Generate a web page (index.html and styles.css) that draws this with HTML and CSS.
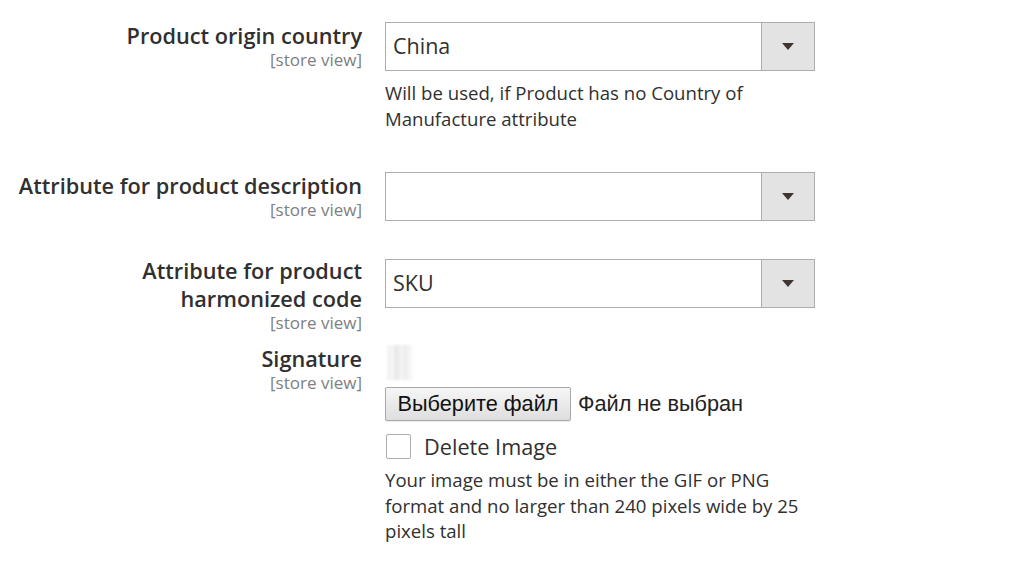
FILE: index.html
```html
<!DOCTYPE html>
<html lang="en">
<head>
<meta charset="utf-8">
<title>Config</title>
<link rel="stylesheet" href="styles.css">
</head>
<body>
<div class="form">
  <div class="field f1">
    <div class="label"><span class="title">Product origin country</span><span class="scope">[store view]</span></div>
    <div class="control">
      <div class="select"><span class="value">China</span><span class="arrow"><span class="tri"></span></span></div>
      <div class="note">Will be used, if Product has no Country of Manufacture attribute</div>
    </div>
  </div>
  <div class="field f2">
    <div class="label"><span class="title">Attribute for product description</span><span class="scope">[store view]</span></div>
    <div class="control">
      <div class="select"><span class="value"></span><span class="arrow"><span class="tri"></span></span></div>
    </div>
  </div>
  <div class="field f3">
    <div class="label"><span class="title narrow">Attribute for product harmonized code</span><span class="scope">[store view]</span></div>
    <div class="control">
      <div class="select"><span class="value">SKU</span><span class="arrow"><span class="tri"></span></span></div>
    </div>
  </div>
  <div class="field f4">
    <div class="label"><span class="title">Signature</span><span class="scope">[store view]</span></div>
    <div class="control">
      <div class="preview"></div>
      <div class="file"><span class="file-btn">Выберите файл</span><span class="file-name">Файл не выбран</span></div>
      <label class="check"><span class="box"></span><span class="check-text">Delete Image</span></label>
      <div class="note">Your image must be in either the GIF or PNG format and no larger than 240 pixels wide by 25 pixels tall</div>
    </div>
  </div>
</div>
</body>
</html>
```
FILE: styles.css
```css
html, body {
  margin: 0;
  padding: 0;
  background: #ffffff;
}
body {
  font-family: "Open Sans", "DejaVu Sans", sans-serif;
  color: #303030;
  width: 1024px;
  height: 569px;
  overflow: hidden;
}
.form {
  display: flex;
  flex-direction: column;
  padding-top: 22px;
}
.field {
  display: grid;
  grid-template-columns: 362px 430px;
  column-gap: 23px;
  align-items: start;
}
.f2 { margin-top: 41px; }
.f3 { margin-top: 38px; }
.f4 { margin-top: 13px; }
.label {
  display: flex;
  flex-direction: column;
  align-items: flex-end;
  text-align: right;
}
.title {
  font-weight: 600;
  font-size: 21.7px;
  line-height: 28px;
  color: #303030;
}
.title.narrow {
  max-width: 240px;
  margin-top: -2px;
}
.scope {
  font-size: 17px;
  line-height: 19px;
  color: #808080;
}
.select {
  display: flex;
  height: 49px;
  box-sizing: border-box;
  border: 1px solid #adadad;
  background: #ffffff;
}
.value {
  flex: 1;
  padding-left: 7px;
  font-size: 21.5px;
  line-height: 46px;
  color: #303030;
}
.arrow {
  width: 52px;
  border-left: 1px solid #adadad;
  background: #e3e3e3;
  display: flex;
  align-items: center;
  justify-content: center;
}
.tri {
  width: 0;
  height: 0;
  border-left: 6px solid transparent;
  border-right: 6px solid transparent;
  border-top: 7px solid #41362f;
}
.note {
  margin-top: 9px;
  font-size: 18.6px;
  line-height: 25.5px;
  color: #303030;
}
.preview {
  width: 28px;
  height: 35px;
  margin-left: 1px;
  background:
    linear-gradient(90deg, rgba(255,255,255,0) 0, #eeeeee 3px, #f7f7f7 7px, #e4e4e4 10px, #f3f3f3 15px, #ebebeb 20px, rgba(255,255,255,0) 28px);
  filter: blur(1px);
  opacity: 0.9;
}
.file {
  display: flex;
  align-items: center;
  margin-top: 7px;
  font-family: "Liberation Sans", Arial, sans-serif;
  font-size: 21.7px;
}
.file-btn {
  box-sizing: border-box;
  height: 34px;
  width: 186px;
  border: 1px solid #a9a9a9;
  border-radius: 2px;
  background: linear-gradient(#f6f6f6, #dedede);
  color: #111111;
  display: flex;
  align-items: center;
  justify-content: center;
  box-shadow: 0 1px 1px rgba(0,0,0,0.08);
}
.file-name {
  margin-left: 7px;
  color: #222222;
}
.check {
  display: flex;
  align-items: center;
  margin-top: 13px;
}
.box {
  box-sizing: border-box;
  width: 25px;
  height: 25px;
  border: 1px solid #adadad;
  border-radius: 2px;
  background: #ffffff;
  margin-left: 1px;
}
.check-text {
  margin-left: 13px;
  font-size: 21.7px;
  line-height: 24px;
  color: #303030;
}
.f4 .note {
  margin-top: 8px;
}
```
